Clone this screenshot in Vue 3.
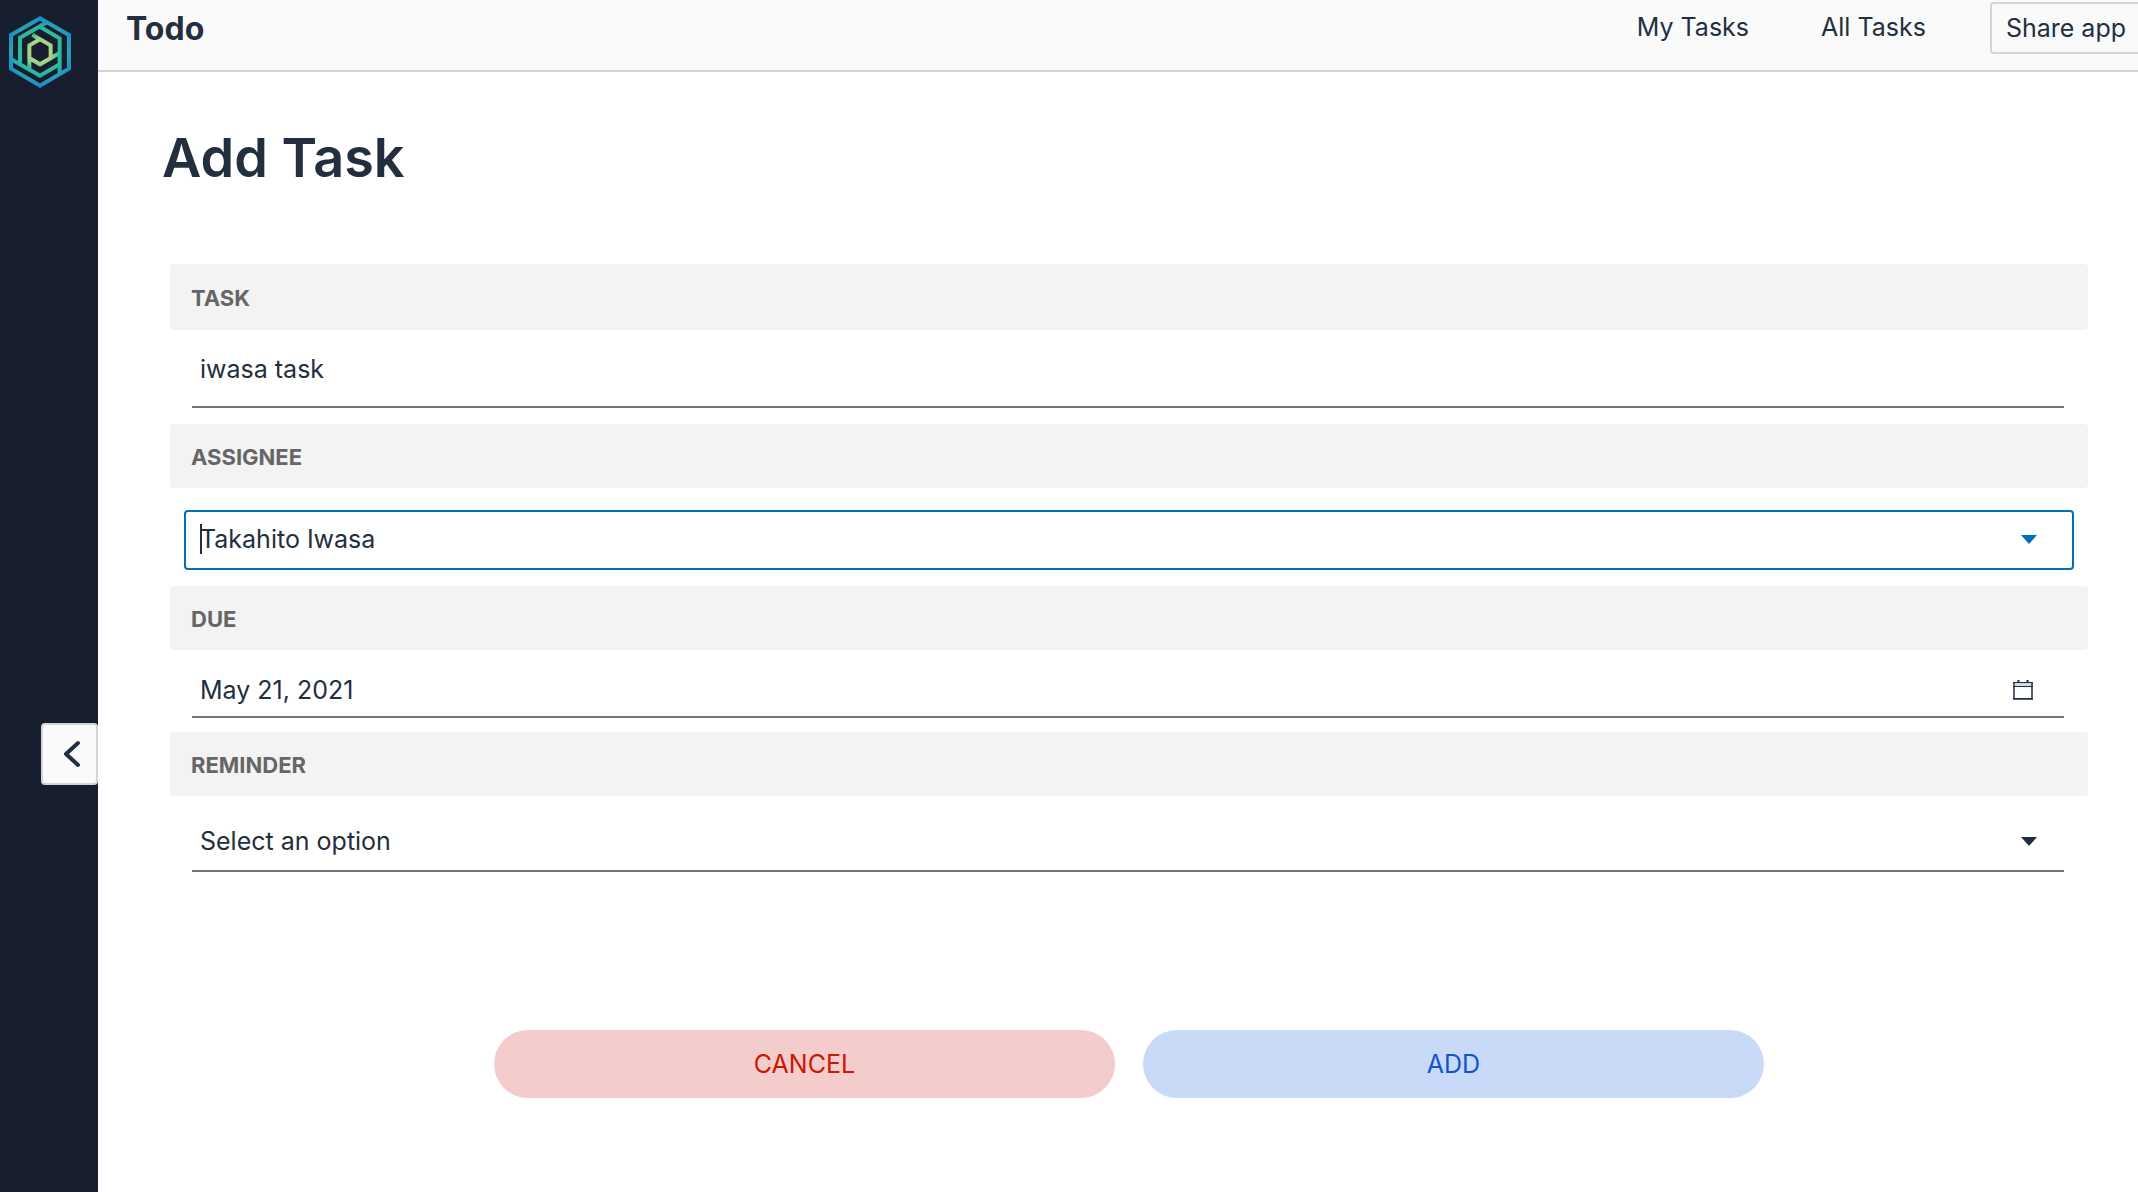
<script setup>
import { ref } from 'vue'

const task = ref('iwasa task')
const assignee = ref('Takahito Iwasa')
const due = ref('May 21, 2021')
const reminder = ref('')
</script>

<template>
  <div class="app">
    <aside class="sidebar">
      <a class="logo" href="#" aria-label="Home">
        <svg width="64" height="74" viewBox="24 45 192 222" fill="none" stroke="url(#logo-fill)" stroke-width="12">
          <defs>
            <radialGradient id="logo-fill" gradientUnits="userSpaceOnUse" cx="120" cy="155" r="108">
              <stop offset="0.2" stop-color="#c3da85" />
              <stop offset="0.38" stop-color="#93cf8b" />
              <stop offset="0.52" stop-color="#30bc9b" />
              <stop offset="0.7" stop-color="#2bb2a5" />
              <stop offset="0.96" stop-color="#2085d0" />
            </radialGradient>
          </defs>
          <path d="M120 55 207 105V206L120 257 33 206V105Z" />
          <path d="M60 192V113L142 66M120 80 179 115V222M36 179 120 227 179 193" />
          <path d="M97 104 152 136V174M179 159 120 193 88 174M88 208V136L120 118" />
        </svg>
      </a>
      <button class="collapse" type="button" aria-label="Collapse sidebar">
        <svg width="18" height="28" viewBox="0 0 18 28" fill="none" stroke="#232f3e" stroke-width="4" stroke-linecap="round" stroke-linejoin="round">
          <path d="M15 3 3 14 15 25" />
        </svg>
      </button>
    </aside>

    <div class="page">
      <header class="topbar">
        <span class="brand">Todo</span>
        <nav class="nav">
          <a href="#">My Tasks</a>
          <a href="#">All Tasks</a>
        </nav>
        <button class="share" type="button">Share app</button>
      </header>

      <main class="content">
        <h1>Add Task</h1>
        <form @submit.prevent>
          <label class="label label-first" for="task">TASK</label>
          <div class="field field-task">
            <input id="task" v-model="task" type="text" />
          </div>

          <label class="label" for="assignee">ASSIGNEE</label>
          <div class="field field-active">
            <select id="assignee" v-model="assignee">
              <option>Takahito Iwasa</option>
            </select>
            <span class="caret"></span>
            <svg class="arrow" width="16" height="9" viewBox="0 0 16 9"><path d="M0 0H16L8 9Z" fill="#0070b3" /></svg>
          </div>

          <label class="label" for="due">DUE</label>
          <div class="field field-due">
            <input id="due" v-model="due" type="text" />
            <svg class="calendar" width="20" height="20" viewBox="0 0 20 20" fill="none" stroke="#232f3e">
              <path d="M1 3H19V6H1Z" fill="#d5dbdb" stroke="none" />
              <path d="M1 2V19H19V2" stroke="#56616f" stroke-width="2" />
              <path d="M0 2.5H20M0 6.5H20M0 18.5H20" />
              <path d="M5.5 0V3M14.5 0V3" stroke-width="2" />
            </svg>
          </div>

          <label class="label" for="reminder">REMINDER</label>
          <div class="field field-reminder">
            <select id="reminder" v-model="reminder">
              <option value="">Select an option</option>
            </select>
            <svg class="arrow" width="16" height="9" viewBox="0 0 16 9"><path d="M0 0H16L8 9Z" fill="#232f3e" /></svg>
          </div>

          <div class="actions">
            <button class="cancel" type="button">CANCEL</button>
            <button class="add" type="submit">ADD</button>
          </div>
        </form>
      </main>
    </div>
  </div>
</template>

<style>
body {
  margin: 0;
  background: #fff;
}
</style>

<style scoped>
.app {
  display: flex;
  min-height: 100vh;
  font-family: Inter, "Liberation Sans", sans-serif;
  font-size: 25px;
  line-height: 32px;
  color: #232f3e;
}

.app * {
  box-sizing: border-box;
}

button,
input,
select {
  font: inherit;
  color: inherit;
  margin: 0;
}

.sidebar {
  position: relative;
  flex: 0 0 98px;
  background: #171e2d;
}

.logo {
  display: block;
  padding: 15px 8px;
}

.logo svg {
  display: block;
}

.collapse {
  position: absolute;
  right: 0;
  top: 723px;
  display: flex;
  align-items: center;
  justify-content: center;
  width: 57px;
  height: 62px;
  padding: 0 0 0 4px;
  border: 2px solid #d0d5db;
  border-radius: 4px;
  background: #fafafa;
}

.page {
  flex: 1;
  min-width: 0;
}

.topbar {
  display: flex;
  align-items: flex-start;
  height: 72px;
  padding-left: 28px;
  overflow: hidden;
  background: #fafafa;
  border-bottom: 2px solid #d0d5db;
}

.brand {
  padding-top: 13px;
  font-size: 32px;
  font-weight: 700;
}

.nav {
  display: flex;
  gap: 72px;
  margin-left: auto;
  margin-right: 64px;
  padding-top: 11px;
}

.nav a {
  color: inherit;
  text-decoration: none;
}

.share {
  height: 52px;
  margin-top: 2px;
  margin-right: -4px;
  padding: 0 14px;
  border: 2px solid #d0d5db;
  border-radius: 4px;
  background: transparent;
  white-space: nowrap;
}

.content {
  padding: 52px 50px 94px 72px;
}

h1 {
  margin: 0 0 72px -8px;
  font-size: 54px;
  line-height: 68px;
  font-weight: 600;
}

.label {
  display: flex;
  align-items: center;
  height: 64px;
  padding: 2px 21px 0;
  border-radius: 4px;
  background: #f3f3f3;
  color: #666;
  font-size: 22px;
  font-weight: 700;
}

.label-first {
  height: 66px;
}

.field {
  position: relative;
  display: flex;
  align-items: center;
  margin: 0 24px 16px 22px;
  border-bottom: 2px solid #6b7680;
}

.field input,
.field select {
  width: 100%;
  height: 40px;
  padding: 0 60px 0 8px;
  border: 0;
  outline: 0;
  background: transparent;
  appearance: none;
}

.field-task {
  height: 78px;
  padding-top: 2px;
}

.field-active {
  height: 60px;
  margin: 22px 14px 16px;
  padding-bottom: 2px;
  border: 2px solid #0070b3;
  border-radius: 4px;
}

.field-active select {
  padding-left: 14px;
}

.field-due {
  height: 68px;
  margin-bottom: 14px;
  padding-top: 14px;
}

.field-reminder {
  height: 76px;
  margin-bottom: 0;
  padding-top: 16px;
}

.caret {
  position: absolute;
  left: 14px;
  top: 12px;
  width: 2px;
  height: 30px;
  background: #232f3e;
}

.arrow {
  position: absolute;
  right: 27px;
}

.field-active .arrow {
  right: 35px;
}

.calendar {
  position: absolute;
  right: 31px;
}

.actions {
  display: grid;
  grid-template-columns: 1fr 1fr;
  gap: 28px;
  max-width: 1270px;
  margin: 158px auto 0;
}

.actions button {
  height: 68px;
  padding: 0;
  border: 0;
  border-radius: 34px;
}

.cancel {
  background: #f4cccc;
  color: #cc1800;
}

.add {
  background: #c9daf8;
  color: #1155cc;
}
</style>
